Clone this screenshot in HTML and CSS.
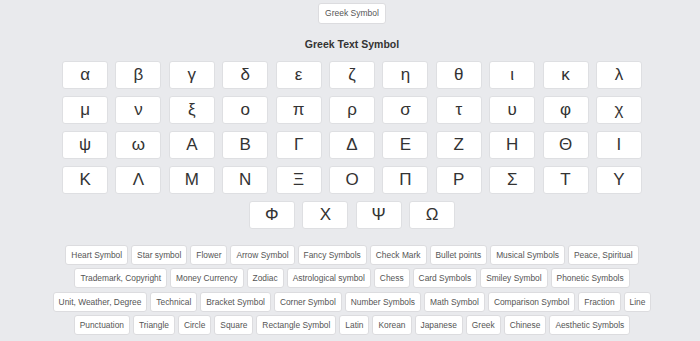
FILE: index.html
```html
<!DOCTYPE html>
<html lang="en">
<head>
    <meta charset="utf-8">
    <meta name="viewport" content="width=device-width, initial-scale=1.0">
    <title>Greek Text Symbol</title>
    <link rel="stylesheet" href="styles.css">
</head>
<body>
    <div class="main">
        <div class="top">
            <a class="top-btn" href="#">Greek Symbol</a>
        </div>
        <h1>Greek Text Symbol</h1>
        <div class="letters">
            <span class="sym">α</span><span class="sym">β</span><span class="sym">γ</span><span class="sym">δ</span><span class="sym">ε</span><span class="sym">ζ</span><span class="sym">η</span><span class="sym">θ</span><span class="sym">ι</span><span class="sym">κ</span><span class="sym">λ</span>
            <span class="sym">μ</span><span class="sym">ν</span><span class="sym">ξ</span><span class="sym">ο</span><span class="sym">π</span><span class="sym">ρ</span><span class="sym">σ</span><span class="sym">τ</span><span class="sym">υ</span><span class="sym">φ</span><span class="sym">χ</span>
            <span class="sym">ψ</span><span class="sym">ω</span><span class="sym">Α</span><span class="sym">Β</span><span class="sym">Γ</span><span class="sym">Δ</span><span class="sym">Ε</span><span class="sym">Ζ</span><span class="sym">Η</span><span class="sym">Θ</span><span class="sym">Ι</span>
            <span class="sym">Κ</span><span class="sym">Λ</span><span class="sym">Μ</span><span class="sym">Ν</span><span class="sym">Ξ</span><span class="sym">Ο</span><span class="sym">Π</span><span class="sym">Ρ</span><span class="sym">Σ</span><span class="sym">Τ</span><span class="sym">Υ</span>
            <span class="sym">Φ</span><span class="sym">Χ</span><span class="sym">Ψ</span><span class="sym">Ω</span>
        </div>
        <div class="tags">
            <a href="#">Heart Symbol</a>
            <a href="#">Star symbol</a>
            <a href="#">Flower</a>
            <a href="#">Arrow Symbol</a>
            <a href="#">Fancy Symbols</a>
            <a href="#">Check Mark</a>
            <a href="#">Bullet points</a>
            <a href="#">Musical Symbols</a>
            <a href="#">Peace, Spiritual</a>
            <a href="#">Trademark, Copyright</a>
            <a href="#">Money Currency</a>
            <a href="#">Zodiac</a>
            <a href="#">Astrological symbol</a>
            <a href="#">Chess</a>
            <a href="#">Card Symbols</a>
            <a href="#">Smiley Symbol</a>
            <a href="#">Phonetic Symbols</a>
            <a href="#">Unit, Weather, Degree</a>
            <a href="#">Technical</a>
            <a href="#">Bracket Symbol</a>
            <a href="#">Corner Symbol</a>
            <a href="#">Number Symbols</a>
            <a href="#">Math Symbol</a>
            <a href="#">Comparison Symbol</a>
            <a href="#">Fraction</a>
            <a href="#">Line</a>
            <a href="#">Punctuation</a>
            <a href="#">Triangle</a>
            <a href="#">Circle</a>
            <a href="#">Square</a>
            <a href="#">Rectangle Symbol</a>
            <a href="#">Latin</a>
            <a href="#">Korean</a>
            <a href="#">Japanese</a>
            <a href="#">Greek</a>
            <a href="#">Chinese</a>
            <a href="#">Aesthetic Symbols</a>
        </div>
    </div>
</body>
</html>
```

FILE: styles.css
```css
body {
    font-family: 'Liberation Sans', Arial, sans-serif;
    margin: 0;
    padding: 0;
    background-color: #e9eaed;
    color: #333;
}
.main {
    width: 606px;
    margin: 0 auto;
    padding-left: 4px;
}
.top {
    display: flex;
    justify-content: center;
    padding-top: 3px;
}
.top-btn {
    display: inline-block;
    height: 21px;
    line-height: 19px;
    padding: 0 6px;
    font-size: 8.5px;
    color: #555;
    text-decoration: none;
    background-color: #fff;
    border: 1px solid #dcdcdf;
    border-radius: 3px;
    box-sizing: border-box;
}
h1 {
    font-size: 10.5px;
    font-weight: bold;
    text-align: center;
    margin: 14px 0 11px;
    color: #333;
}
.letters {
    width: 582px;
    margin: 0 auto;
    display: flex;
    flex-wrap: wrap;
    justify-content: center;
    column-gap: 7.4px;
    row-gap: 7px;
}
.sym {
    width: 46px;
    height: 28px;
    box-sizing: border-box;
    display: flex;
    justify-content: center;
    align-items: center;
    background-color: #fff;
    border: 1px solid #dedfe2;
    border-radius: 3px;
    font-size: 17px;
    color: #333;
}
.tags {
    display: flex;
    flex-wrap: wrap;
    justify-content: center;
    gap: 3.3px 3px;
    margin-top: 16px;
}
.tags a {
    display: inline-block;
    height: 20px;
    line-height: 18px;
    padding: 0 5px;
    font-size: 8.4px;
    color: #555;
    text-decoration: none;
    background-color: #fff;
    border: 1px solid #dcdcdf;
    border-radius: 3px;
    box-sizing: border-box;
}
```
